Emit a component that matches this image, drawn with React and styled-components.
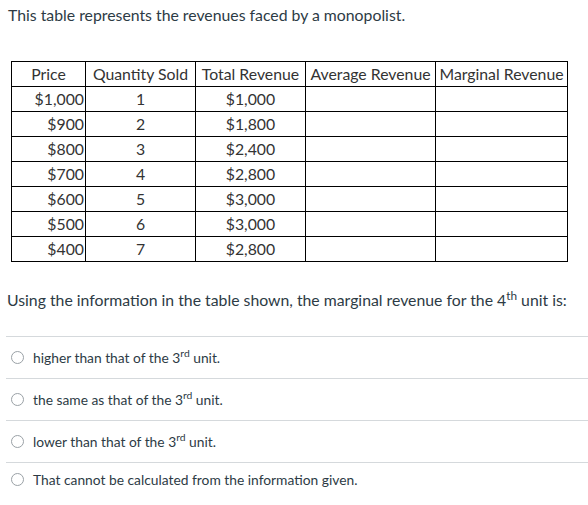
import React from 'react';
import styled, { createGlobalStyle } from 'styled-components';

const GlobalStyle = createGlobalStyle`
  body {
    margin: 0;
    background: #ffffff;
    font-family: Lato, 'Open Sans', sans-serif;
    color: #2d3b45;
  }
`;

const Page = styled.div`
  width: 588px;
  padding-top: 5px;
`;

const Intro = styled.p`
  margin: 0 0 0 8px;
  font-size: 15.8px;
  line-height: 20px;
`;

const Table = styled.table`
  margin: 36px 0 0 11px;
  border-collapse: collapse;
  font-size: 15.8px;
  line-height: 1;
  color: #333;
`;

const Cell = styled.td`
  border: 1px solid #000;
  height: 25px;
  padding: 0;
  width: ${(p) => p.w}px;
  text-align: ${(p) => p.align || 'center'};
  padding-right: ${(p) => (p.align === 'right' ? '1px' : '0')};
  box-sizing: border-box;
  white-space: nowrap;
`;

const Question = styled.p`
  margin: 28px 0 0 7px;
  font-size: 15.8px;
  line-height: 20px;
`;

const Sup = styled.sup`
  font-size: 0.75em;
  line-height: 0;
`;

const Options = styled.div`
  margin: 26px 0 0 6px;
`;

const Option = styled.label`
  display: flex;
  align-items: center;
  gap: 9px;
  height: ${(p) => (p.last ? '34px' : '42px')};
  padding-left: 5px;
  border-top: 1px solid #d5d9dc;
  font-size: 13.8px;
  box-sizing: border-box;
`;

const Radio = styled.span`
  width: 13px;
  height: 13px;
  border-radius: 50%;
  border: 1px solid #9aa1a6;
  box-sizing: border-box;
  flex: none;
`;

const widths = [74, 110, 110, 130, 132];
const headers = ['Price', 'Quantity Sold', 'Total Revenue', 'Average Revenue', 'Marginal Revenue'];
const rows = [
  ['$1,000', '1', '$1,000'],
  ['$900', '2', '$1,800'],
  ['$800', '3', '$2,400'],
  ['$700', '4', '$2,800'],
  ['$600', '5', '$3,000'],
  ['$500', '6', '$3,000'],
  ['$400', '7', '$2,800'],
];

const options = [
  <>higher than that of the 3<Sup>rd</Sup> unit.</>,
  <>the same as that of the 3<Sup>rd</Sup> unit.</>,
  <>lower than that of the 3<Sup>rd</Sup> unit.</>,
  <>That cannot be calculated from the information given.</>,
];

export default function App() {
  return (
    <Page>
      <GlobalStyle />
      <Intro>This table represents the revenues faced by a monopolist.</Intro>
      <Table>
        <tbody>
          <tr>
            {headers.map((h, i) => (
              <Cell key={h} w={widths[i]}>{h}</Cell>
            ))}
          </tr>
          {rows.map((r) => (
            <tr key={r[1]}>
              <Cell w={widths[0]} align="right">{r[0]}</Cell>
              <Cell w={widths[1]}>{r[1]}</Cell>
              <Cell w={widths[2]}>{r[2]}</Cell>
              <Cell w={widths[3]} />
              <Cell w={widths[4]} />
            </tr>
          ))}
        </tbody>
      </Table>
      <Question>
        Using the information in the table shown, the marginal revenue for the 4<Sup>th</Sup> unit is:
      </Question>
      <Options>
        {options.map((o, i) => (
          <Option key={i} last={i === options.length - 1}>
            <Radio />
            <span>{o}</span>
          </Option>
        ))}
      </Options>
    </Page>
  );
}
